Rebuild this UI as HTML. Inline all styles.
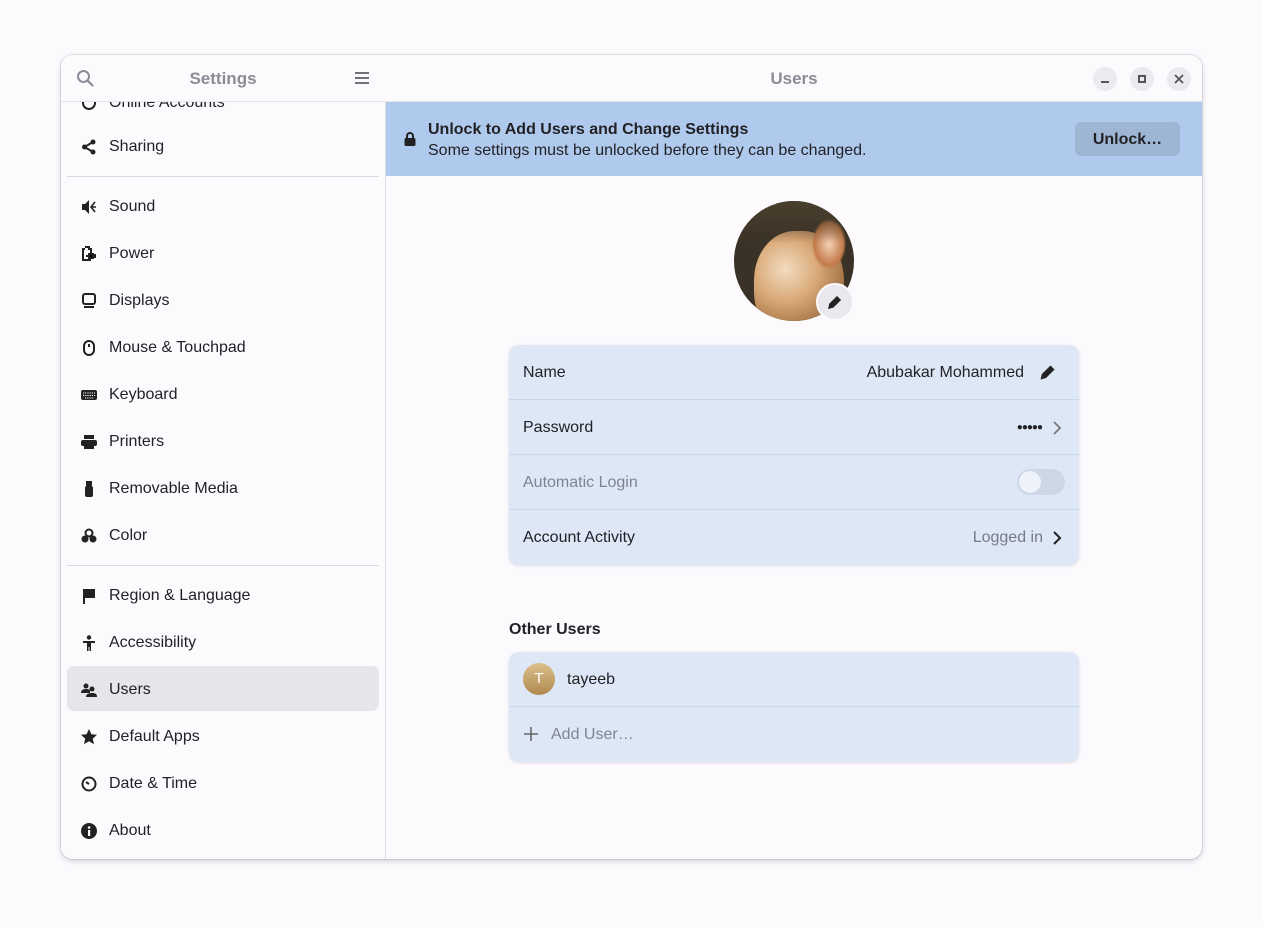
<!DOCTYPE html>
<html><head><meta charset="utf-8"><style>
*{box-sizing:border-box;margin:0;padding:0}
body{width:1263px;height:927px;background:#fcfafd;font-family:"Liberation Sans",sans-serif;color:#222226;position:relative;overflow:hidden}
.win{position:absolute;left:61px;top:55px;width:1141px;height:804px;border-radius:12px;background:#fcfafd;box-shadow:0 0 0 1px rgba(0,0,0,.08),0 2px 6px rgba(0,0,0,.18);overflow:hidden}
.side{position:absolute;left:0;top:0;width:325px;height:804px;border-right:1px solid #dcdbe0;background:#fcfafd}
.hdr{position:absolute;top:0;height:47px;border-bottom:1px solid #e4e3e8;background:#fcfafd}
.t{position:absolute;font-size:16px;white-space:nowrap}
.item{position:absolute;left:20px;font-size:16px;width:300px;height:20px;display:flex;align-items:center;padding-top:2px}
.item svg{width:16px;height:16px;margin-right:12px;flex:none}
.sep{position:absolute;left:6px;width:312px;height:1px;background:#dcdbe0}
.card{position:absolute;left:448px;width:570px;background:#dde7f6;border-radius:10px;box-shadow:0 1px 3px rgba(0,0,0,.12)}
.row{position:relative;height:55px;border-bottom:1px solid #c9d5e8}
.row:last-child{border-bottom:none}
.row .t{top:19px}
.wb{position:absolute;top:12px;width:24px;height:24px;border-radius:50%;background:#ebeaef}
</style></head><body>
<div class="win">
 <div class="side">
  <div class="hdr" style="left:0;width:325px">
   <svg style="position:absolute;left:15px;top:14px" width="18" height="18" viewBox="0 0 18 18"><circle cx="7.5" cy="7.5" r="5.5" fill="none" stroke="#8a8d96" stroke-width="2"/><path d="M11.5 11.5l5 5" stroke="#8a8d96" stroke-width="2.2" stroke-linecap="round"/></svg>
   <div class="t" style="left:0;width:324px;text-align:center;top:14px;font-weight:bold;color:#8a8d96;font-size:17px">Settings</div>
   <svg style="position:absolute;left:293px;top:15px" width="16" height="16" viewBox="0 0 16 16"><path d="M1 3h14M1 8h14M1 13h14" stroke="#6f727a" stroke-width="2"/></svg>
  </div>
  <div class="item" style="top:37px;clip-path:inset(10px 0 0 0)"><svg viewBox="0 0 16 16"><circle cx="8" cy="8" r="6" fill="none" stroke="#222" stroke-width="2"/></svg>Online Accounts</div>
  <div class="item" style="top:81px"><svg viewBox="0 0 16 16"><circle cx="12" cy="3" r="2.5" fill="#222"/><circle cx="12" cy="13" r="2.5" fill="#222"/><circle cx="3.5" cy="8" r="2.5" fill="#222"/><path d="M12 3L3.5 8 12 13" stroke="#222" stroke-width="2" fill="none"/></svg>Sharing</div>
  <div class="sep" style="top:121px"></div>
  <div class="item" style="top:141px"><svg viewBox="0 0 16 16"><path d="M1 5h3l4-4v14l-4-4H1z" fill="#222"/><path d="M14 3l-4 5 4 5M10 8h5" stroke="#222" stroke-width="1.6" fill="none"/></svg>Sound</div>
  <div class="item" style="top:188px"><svg viewBox="0 0 16 16"><path d="M4 1h4v2h2v4M10 14H2V3h2" stroke="#222" stroke-width="2" fill="none"/><path d="M8 8h4v4H8zM12 9h3M12 11h3M5 10h3" stroke="#222" stroke-width="2"/></svg>Power</div>
  <div class="item" style="top:235px"><svg viewBox="0 0 16 16"><rect x="2" y="1" width="12" height="10" rx="2" fill="none" stroke="#222" stroke-width="2"/><path d="M3 14h10" stroke="#222" stroke-width="2"/></svg>Displays</div>
  <div class="item" style="top:282px"><svg viewBox="0 0 16 16"><rect x="3" y="1" width="10" height="14" rx="5" fill="none" stroke="#222" stroke-width="2"/><path d="M8 4v3" stroke="#222" stroke-width="2"/></svg>Mouse &amp; Touchpad</div>
  <div class="item" style="top:329px"><svg viewBox="0 0 16 16"><rect x="0" y="3" width="16" height="10" rx="2" fill="#222"/><path d="M2 6h12M2 8.5h12M4 11h8" stroke="#fff" stroke-width="1" stroke-dasharray="1.2 1"/></svg>Keyboard</div>
  <div class="item" style="top:376px"><svg viewBox="0 0 16 16"><rect x="3" y="1" width="10" height="4" fill="#222"/><rect x="0" y="6" width="16" height="6" rx="2" fill="#222"/><rect x="3" y="11" width="10" height="4" fill="#222"/></svg>Printers</div>
  <div class="item" style="top:423px"><svg viewBox="0 0 16 16"><rect x="5" y="0" width="6" height="5" fill="#222"/><rect x="4" y="5" width="8" height="11" rx="2" fill="#222"/></svg>Removable Media</div>
  <div class="item" style="top:470px"><svg viewBox="0 0 16 16"><circle cx="8" cy="5" r="3.5" fill="none" stroke="#222" stroke-width="2"/><circle cx="4" cy="11" r="3.5" fill="#222"/><circle cx="12" cy="11" r="3.5" fill="#222"/></svg>Color</div>
  <div class="sep" style="top:510px"></div>
  <div class="item" style="top:530px"><svg viewBox="0 0 16 16"><path d="M2 1h2v15H2zM4 1h10v9H4z" fill="#222"/></svg>Region &amp; Language</div>
  <div class="item" style="top:577px"><svg viewBox="0 0 16 16"><circle cx="8" cy="2.5" r="2.2" fill="#222"/><path d="M2 6h12v2h-4v8H8.5v-4h-1v4H6V8H2z" fill="#222"/></svg>Accessibility</div>
  <div style="position:absolute;left:6px;top:611px;width:312px;height:45px;border-radius:7px;background:#e6e5ea"></div>
  <div class="item" style="top:624px"><svg viewBox="0 0 16 16"><circle cx="5" cy="4" r="2.5" fill="#222"/><path d="M0 11c0-3 2-4 5-4s4 1 4 2v2z" fill="#222"/><circle cx="11" cy="7" r="2.5" fill="#222"/><path d="M5 15c0-3 2.5-4 6-4s5 1 5 4z" fill="#222"/></svg>Users</div>
  <div class="item" style="top:671px"><svg viewBox="0 0 16 16"><path d="M8 0l2.4 5.2 5.6.6-4.2 3.8 1.2 5.6L8 12.3 3 15.2l1.2-5.6L0 5.8l5.6-.6z" fill="#222"/></svg>Default Apps</div>
  <div class="item" style="top:718px"><svg viewBox="0 0 16 16"><circle cx="8" cy="8" r="6.5" fill="none" stroke="#222" stroke-width="2"/><path d="M8 8L5 6" stroke="#222" stroke-width="2"/></svg>Date &amp; Time</div>
  <div class="item" style="top:765px"><svg viewBox="0 0 16 16"><circle cx="8" cy="8" r="8" fill="#222"/><rect x="7" y="7" width="2.2" height="6" fill="#fff"/><circle cx="8.1" cy="4.5" r="1.3" fill="#fff"/></svg>About</div>
 </div>
 <div class="hdr" style="left:325px;width:816px">
  <div class="t" style="left:0;width:816px;text-align:center;top:14px;font-weight:bold;color:#8a8d96;font-size:17px">Users</div>
  <div class="wb" style="left:707px"><div style="position:absolute;left:8px;top:14px;width:8px;height:2px;background:#555"></div></div>
  <div class="wb" style="left:744px"><div style="position:absolute;left:8px;top:8px;width:8px;height:8px;border:2px solid #555"></div></div>
  <div class="wb" style="left:781px"><svg style="position:absolute;left:7px;top:7px" width="10" height="10" viewBox="0 0 10 10"><path d="M1 1l8 8M9 1L1 9" stroke="#555" stroke-width="1.8"/></svg></div>
 </div>
 <div style="position:absolute;left:325px;top:47px;width:816px;height:74px;background:#b0caed">
  <svg style="position:absolute;left:18px;top:30px" width="12" height="14" viewBox="0 0 12 14"><path d="M3 6V4a3 3 0 016 0v2" stroke="#222" stroke-width="2" fill="none"/><rect x="0.5" y="6" width="11" height="8" rx="1.5" fill="#222"/></svg>
  <div class="t" style="left:42px;top:19px;font-weight:bold">Unlock to Add Users and Change Settings</div>
  <div class="t" style="left:42px;top:40px">Some settings must be unlocked before they can be changed.</div>
  <div style="position:absolute;left:689px;top:20px;width:105px;height:34px;border-radius:6px;background:#9fb5d4;font-weight:bold;font-size:16px;text-align:center;line-height:35px">Unlock…</div>
 </div>
 <div style="position:absolute;left:673px;top:146px;width:120px;height:120px;border-radius:50%;overflow:hidden;background:#3a3226">
  <div style="position:absolute;left:20px;top:30px;width:90px;height:110px;border-radius:45%;background:radial-gradient(circle at 35% 35%,#f2dcc0 0,#d9a877 35%,#9a6a3e 70%,rgba(60,50,38,0) 80%)"></div>
  <div style="position:absolute;left:78px;top:18px;width:34px;height:50px;border-radius:50%;background:radial-gradient(#f4d2b4,#c47a4a 60%,rgba(0,0,0,0) 72%)"></div>
  <div style="position:absolute;left:0;top:0;width:100%;height:35%;background:linear-gradient(180deg,#4a3f2e,rgba(74,63,46,0))"></div>
 </div>
 <div style="position:absolute;left:755px;top:228px;width:38px;height:38px;border-radius:50%;background:#e9e8ed;border:2px solid #fcfafd"><svg style="position:absolute;left:10px;top:10px" width="14" height="14" viewBox="0 0 14 14"><path d="M1 13l1-4 7-7 3 3-7 7z" fill="#222" stroke="#222" stroke-width="1.5"/></svg></div>
 <div class="card" style="top:290px">
  <div class="row"><div class="t" style="left:14px">Name</div><div class="t" style="right:55px">Abubakar Mohammed</div><svg style="position:absolute;right:23px;top:19px" width="16" height="16" viewBox="0 0 16 16"><path d="M1.5 14.5l1-4 8-8 3 3-8 8z" fill="#222" stroke="#222" stroke-width="1.5"/></svg></div>
  <div class="row"><div class="t" style="left:14px">Password</div><div class="t" style="right:37px;font-size:10px;top:22px;letter-spacing:-1px">●●●●●</div><svg style="position:absolute;right:17px;top:20px" width="10" height="16" viewBox="0 0 10 16"><path d="M2 2l6 6-6 6" fill="none" stroke="#777" stroke-width="1.8"/></svg></div>
  <div class="row"><div class="t" style="left:14px;color:#7f8590">Automatic Login</div><div style="position:absolute;right:14px;top:14px;width:48px;height:26px;border-radius:13px;background:#cdd6e4"><div style="position:absolute;left:2px;top:2px;width:22px;height:22px;border-radius:50%;background:#eef2fa"></div></div></div>
  <div class="row"><div class="t" style="left:14px">Account Activity</div><div class="t" style="right:36px;color:#777b84">Logged in</div><svg style="position:absolute;right:17px;top:20px" width="10" height="16" viewBox="0 0 10 16"><path d="M2 2l6 6-6 6" fill="none" stroke="#222" stroke-width="2"/></svg></div>
 </div>
 <div class="t" style="left:448px;top:566px;font-weight:bold">Other Users</div>
 <div class="card" style="top:597px">
  <div class="row"><div style="position:absolute;left:14px;top:11px;width:32px;height:32px;border-radius:50%;background:linear-gradient(#dcc08c,#b08850);color:#fff;font-size:15px;text-align:center;line-height:32px">T</div><div class="t" style="left:58px">tayeeb</div></div>
  <div class="row"><svg style="position:absolute;left:15px;top:20px" width="14" height="14" viewBox="0 0 14 14"><path d="M7 0v14M0 7h14" stroke="#666" stroke-width="1.6"/></svg><div class="t" style="left:42px;color:#7f8590">Add User…</div></div>
 </div>
</div>
</body></html>
